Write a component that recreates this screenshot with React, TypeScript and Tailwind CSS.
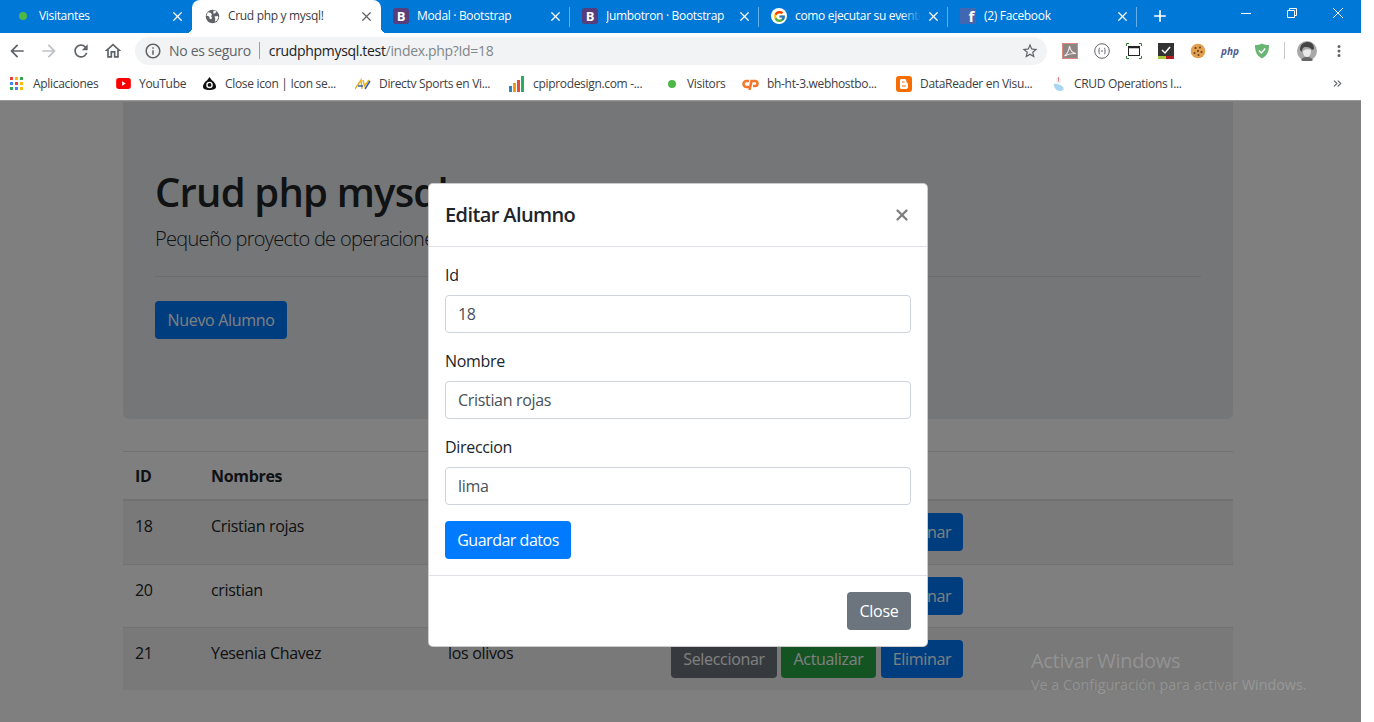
import { ChevronsRight, Plus, X } from 'lucide-react'
import { FcGoogle } from 'react-icons/fc'
import type { ReactNode } from 'react'

function ChromeIcon({ d, className }: { d: string; className: string }) {
  return (
    <svg viewBox="0 0 24 24" className={className} fill="currentColor">
      <path d={d} />
    </svg>
  )
}

const iconPaths = {
  back: 'M20 11H7.83l5.59-5.59L12 4l-8 8 8 8 1.41-1.41L7.83 13H20v-2z',
  forward: 'M4 11h12.17l-5.59-5.59L12 4l8 8-8 8-1.41-1.41L16.17 13H4v-2z',
  reload: 'M17.65 6.35A7.958 7.958 0 0 0 12 4c-4.42 0-7.99 3.58-7.99 8s3.57 8 7.99 8c3.73 0 6.84-2.55 7.73-6h-2.08A5.99 5.99 0 0 1 12 18c-3.31 0-6-2.69-6-6s2.69-6 6-6c1.66 0 3.14.69 4.22 1.78L13 11h7V4l-2.35 2.35z',
  home: 'M12 5.69l5 4.5V18h-2v-6H9v6H7v-7.81l5-4.5M12 3L2 12h3v8h6v-6h2v6h6v-8h3L12 3z',
  info: 'M11 7h2v2h-2zm0 4h2v6h-2zm1-9C6.48 2 2 6.48 2 12s4.48 10 10 10 10-4.48 10-10S17.52 2 12 2zm0 18c-4.41 0-8-3.59-8-8s3.59-8 8-8 8 3.59 8 8-3.59 8-8 8z',
  star: 'M22 9.24l-7.19-.62L12 2 9.19 8.63 2 9.24l5.46 4.73L5.82 21 12 17.27 18.18 21l-1.63-7.03L22 9.24zM12 15.4l-3.76 2.27 1-4.28-3.32-2.88 4.38-.38L12 6.1l1.71 4.04 4.38.38-3.32 2.88 1 4.28L12 15.4z',
  more: 'M12 8a2 2 0 1 0 0-4 2 2 0 0 0 0 4zm0 2a2 2 0 1 0 0 4 2 2 0 0 0 0-4zm0 6a2 2 0 1 0 0 4 2 2 0 0 0 0-4z',
}

function GlobeIcon() {
  return (
    <svg viewBox="0 0 16 16" className="h-[15px] w-[15px]">
      <circle cx="8" cy="8" r="7.2" fill="#5f6368" />
      <path d="M3 3.5l3 .5 1.5 2-1 1.5 1 2-1 1.5-1.5-.5-.5-2.5L1.5 7zM9 1.5l3 1-1 2-2 .5zM10 8l3.5-.5.8 1.5-1.8 3.5-2 1 .5-3z" fill="#fff" />
    </svg>
  )
}

function GreenDot() {
  return <span className="block h-2 w-2 rounded-full bg-[#4db848]" />
}

function BootstrapIcon() {
  return (
    <span className="flex h-4 w-4 items-center justify-center rounded-[3px] bg-[#563d7c] text-[13px] leading-none font-bold text-white">B</span>
  )
}

function FacebookIcon() {
  return (
    <span className="flex h-4 w-4 items-end justify-end bg-[#4267b2] pr-[2px] text-[15px] leading-[15px] font-bold text-white">f</span>
  )
}

function GoogleIcon() {
  return (
    <span className="flex h-4 w-4 items-center justify-center rounded-full bg-white">
      <FcGoogle size={13} />
    </span>
  )
}

const tabs: { title: string; icon: ReactNode; active?: boolean; fade?: boolean; noSep?: boolean }[] = [
  { title: 'Visitantes', icon: <GreenDot />, noSep: true },
  { title: 'Crud php y mysql!', icon: <GlobeIcon />, active: true, noSep: true },
  { title: 'Modal · Bootstrap', icon: <BootstrapIcon /> },
  { title: 'Jumbotron · Bootstrap', icon: <BootstrapIcon /> },
  { title: 'como ejecutar su evento', icon: <GoogleIcon />, fade: true },
  { title: '(2) Facebook', icon: <FacebookIcon /> },
]

function Tab({ title, icon, active, fade, noSep }: (typeof tabs)[number]) {
  return (
    <div className={`relative flex h-[33px] w-[189px] items-center pb-px pl-3 ${active ? 'rounded-t-lg bg-white text-[#3c4043]' : 'text-white'}`}>
      {active && (
        <>
          <span className="absolute bottom-0 -left-[6px] h-[6px] w-[6px] bg-[radial-gradient(circle_at_0_0,transparent_6px,white_6.500px)]" />
          <span className="absolute -right-[6px] bottom-0 h-[6px] w-[6px] bg-[radial-gradient(circle_at_100%_0,transparent_6px,white_6.500px)]" />
        </>
      )}
      <span className="flex w-4 shrink-0 justify-center">{icon}</span>
      <span className="relative ml-2 w-[126px] overflow-hidden text-xs whitespace-nowrap">
        {title}
        {fade && <span className="absolute top-0 right-0 h-full w-5 bg-gradient-to-r from-transparent to-[#0078d7]" />}
      </span>
      <X size={15} strokeWidth={2} className={`ml-[5px] ${active ? 'text-[#5f6368]' : 'text-white'}`} />
      {!noSep && <span className="absolute top-[7px] right-0 h-5 w-px bg-white/40" />}
    </div>
  )
}

function WindowControls() {
  return (
    <div className="ml-auto flex h-full items-start text-white">
      <div className="flex h-[26px] w-[46px] items-center justify-center">
        <span className="block h-px w-[10px] bg-white" />
      </div>
      <div className="flex h-[26px] w-[46px] items-center justify-center">
        <svg viewBox="0 0 10 10" className="h-[10px] w-[10px]" fill="none" stroke="currentColor" strokeWidth="1">
          <path d="M.5 2.5h7v7h-7zM2.5 2.5v-2h7v7h-2" />
        </svg>
      </div>
      <div className="flex h-[26px] w-[46px] items-center justify-center">
        <svg viewBox="0 0 10 10" className="h-[10px] w-[10px]" fill="none" stroke="currentColor" strokeWidth="1">
          <path d="M0 0l10 10M10 0L0 10" />
        </svg>
      </div>
    </div>
  )
}

function TabBar() {
  return (
    <div className="flex h-[33px] bg-[#0078d7] pl-[3px]">
      {tabs.map(tab => (
        <Tab key={tab.title} {...tab} />
      ))}
      <div className="flex h-[33px] w-[46px] items-center justify-center pb-px text-white">
        <Plus size={18} strokeWidth={2.2} />
      </div>
      <WindowControls />
    </div>
  )
}

function AcrobatIcon() {
  return (
    <svg viewBox="0 0 16 16" className="h-4 w-4">
      <rect x=".5" y=".5" width="15" height="15" fill="#8f8484" stroke="#d98b80" />
      <path d="M2.5 13C5 11 7 7 7.5 3c.6 4 3 7 6.5 7.5-4-.3-8 .5-11.500 2.500z" fill="none" stroke="#f3eeee" strokeWidth="1.100" />
    </svg>
  )
}

function ExtensionIcons() {
  return (
    <div className="flex items-center">
      <span className="flex w-8 justify-center"><AcrobatIcon /></span>
      <span className="flex w-8 justify-center">
        <svg viewBox="0 0 16 16" className="h-4 w-4" fill="none" stroke="#5f6368">
          <circle cx="8" cy="8" r="7.300" />
          <path d="M6 5c-1 0-1 1-1 3s0 3 1 3M10 5c1 0 1 1 1 3s0 3-1 3M7 8h2" />
        </svg>
      </span>
      <span className="flex w-8 justify-center">
        <svg viewBox="0 0 16 16" className="h-4 w-4" fill="none">
          <path d="M.5 3V.5H3M13 .5h2.500V3M15.500 13v2.500H13M3 15.500H.5V13" stroke="#2e7d32" />
          <rect x="2.500" y="3.500" width="11" height="9" stroke="#222" />
          <path d="M2.500 4.500h11" stroke="#222" strokeWidth="1.500" />
        </svg>
      </span>
      <span className="flex w-8 justify-center">
        <svg viewBox="0 0 16 16" className="h-4 w-4">
          <rect width="16" height="16" fill="#333" />
          <rect y="13" width="8" height="3" fill="#a4c639" />
          <rect x="8" y="13" width="8" height="3" fill="#b71c1c" />
          <path d="M4 7l3 3 5-6" fill="none" stroke="#fff" strokeWidth="1.500" />
        </svg>
      </span>
      <span className="flex w-8 justify-center">
        <svg viewBox="0 0 16 16" className="h-4 w-4">
          <circle cx="8" cy="8" r="7.300" fill="#e0a050" />
          <circle cx="5.500" cy="5" r="1.100" fill="#6b3e1a" />
          <circle cx="10" cy="4.500" r="1" fill="#6b3e1a" />
          <circle cx="8" cy="8" r="1.100" fill="#6b3e1a" />
          <circle cx="4.500" cy="10" r="1" fill="#6b3e1a" />
          <circle cx="11.500" cy="9" r="1.100" fill="#6b3e1a" />
          <circle cx="8.500" cy="12" r="1" fill="#6b3e1a" />
        </svg>
      </span>
      <span className="flex w-8 justify-center text-[10px] leading-none font-bold tracking-normal text-[#4f5b93] italic">php</span>
      <span className="flex w-8 justify-center">
        <svg viewBox="0 0 16 16" className="h-4 w-4">
          <path d="M8 .5c2 1 4.500 1.500 7 1.500 0 6-1.500 10.500-7 13.500C2.500 12.500 1 8 1 2c2.500 0 5-.5 7-1.500z" fill="#68b574" />
          <path d="M4.800 7.500l2.500 2.500 4-4.500" fill="none" stroke="#fff" strokeWidth="1.500" />
        </svg>
      </span>
      <span className="mx-[6px] h-[17px] w-px bg-[#c8c8c8]" />
      <svg viewBox="0 0 20 20" className="ml-[6px] h-5 w-5">
        <circle cx="10" cy="10" r="10" fill="#a8a8a8" />
        <path d="M3 9c0-6 4-8 8-8s6 3 6 7l-2 1c-1-2-3-3-6-3S5 8 5 11z" fill="#444" />
        <path d="M6 10c2-2 6-2 8-1 0 4-1 7-4 7s-4-3-4-6z" fill="#e8e8e8" />
        <path d="M4 19c1-2 3-3 6-3s5 1 6 3a10 10 0 0 1-12 0z" fill="#666" />
      </svg>
      <span className="ml-[6px] flex w-8 justify-center text-[#5f6368]">
        <ChromeIcon d={iconPaths.more} className="h-[18px] w-[18px]" />
      </span>
    </div>
  )
}

function Toolbar() {
  return (
    <div className="flex h-[35px] items-center bg-white">
      <div className="flex w-[130px] shrink-0 items-center pl-[1px]">
        <span className="flex w-8 justify-center text-[#5f6368]"><ChromeIcon d={iconPaths.back} className="h-5 w-5" /></span>
        <span className="flex w-8 justify-center text-[#bdc1c6]"><ChromeIcon d={iconPaths.forward} className="h-5 w-5" /></span>
        <span className="flex w-8 justify-center text-[#5f6368]"><ChromeIcon d={iconPaths.reload} className="h-5 w-5" /></span>
        <span className="flex w-8 justify-center text-[#5f6368]"><ChromeIcon d={iconPaths.home} className="h-5 w-5" /></span>
      </div>
      <div className="ml-[5px] flex h-7 w-[912px] shrink-0 items-center rounded-full bg-[#f1f3f4] pr-[8px] pl-[9px] text-sm whitespace-nowrap">
        <ChromeIcon d={iconPaths.info} className="h-[18px] w-[18px] text-[#5f6368]" />
        <span className="ml-[7px] text-[#5f6368]">No es seguro</span>
        <span className="mx-2 h-[17px] w-px bg-[#9aa0a6]" />
        <span className="ml-[1px] text-[#202124]">crudphpmysql.test</span>
        <span className="text-[#80868b]">/index.php?Id=18</span>
        <ChromeIcon d={iconPaths.star} className="ml-auto h-[18px] w-[18px] text-[#5f6368]" />
      </div>
      <div className="ml-[7px]">
        <ExtensionIcons />
      </div>
    </div>
  )
}

function AppsIcon() {
  const colors = ['#ea4335', '#fbbc05', '#34a853', '#4285f4', '#ea4335', '#fbbc05', '#34a853', '#4285f4', '#fbbc05']
  return (
    <span className="mr-[2px] grid h-[13px] w-[13px] grid-cols-3 gap-[1.500px]">
      {colors.map((c, i) => (
        <span key={i} style={{ backgroundColor: c }} />
      ))}
    </span>
  )
}

const bookmarks: { label: string; icon: ReactNode; width: string }[] = [
  { label: 'Aplicaciones', icon: <AppsIcon />, width: 'w-[106px]' },
  {
    label: 'YouTube',
    width: 'w-[86px]',
    icon: (
      <svg viewBox="0 0 16 12" className="h-[11px] w-[15px]">
        <rect width="16" height="12" rx="3" fill="#f00" />
        <path d="M6.500 3.500v5l4-2.500z" fill="#fff" />
      </svg>
    ),
  },
  {
    label: 'Close icon | Icon se...',
    width: 'w-[153px]',
    icon: (
      <svg viewBox="0 0 16 16" className="h-[15px] w-[15px]">
        <path d="M8 1l2.500 3.500C13 6 15 9 15 11.500 15 14 12 15 8 15s-7-1-7-3.500C1 9 3 6 5.500 4.500z" fill="#111" />
        <circle cx="8" cy="9.500" r="3.500" fill="#fff" />
        <circle cx="8" cy="9.500" r="2" fill="#111" />
      </svg>
    ),
  },
  {
    label: 'Directv Sports en Vi...',
    width: 'w-[154px]',
    icon: (
      <svg viewBox="0 0 16 12" className="h-3 w-4">
        <path d="M0 11L6 2l1 9M8 2l1.500 6L14 2" fill="none" stroke="#e6b422" strokeWidth="1.500" />
        <path d="M3 8h5M10 11l5-8" fill="none" stroke="#3f5fa8" strokeWidth="1.500" />
      </svg>
    ),
  },
  {
    label: 'cpiprodesign.com -...',
    width: 'w-[156px]',
    icon: (
      <span className="flex h-4 w-4 items-end gap-px">
        <span className="h-[6px] w-[3px] bg-[#2e86c1]" />
        <span className="h-[9px] w-[3px] bg-[#f39c12]" />
        <span className="h-[12px] w-[3px] bg-[#e74c3c]" />
        <span className="h-4 w-[3px] bg-[#27ae60]" />
      </span>
    ),
  },
  {
    label: 'Visitors',
    width: 'w-[77px]',
    icon: (
      <span className="flex w-[14px] justify-center">
        <GreenDot />
      </span>
    ),
  },
  {
    label: 'bh-ht-3.webhostbo...',
    width: 'w-[154px]',
    icon: (
      <svg viewBox="0 0 17 12" className="h-3 w-[17px]" fill="none" stroke="#f4772e" strokeWidth="2.600">
        <path d="M7 3H4.500a3 3 0 0 0 0 6H7" />
        <path d="M7.500 12L9.500 3H13a2.500 2.500 0 0 1 0 5h-2" />
      </svg>
    ),
  },
  {
    label: 'DataReader en Visu...',
    width: 'w-[156px]',
    icon: (
      <svg viewBox="0 0 16 16" className="h-4 w-4">
        <rect width="16" height="16" rx="3" fill="#f76d00" />
        <path d="M5.500 3h3C10 3 10.500 4 10.500 6c0 1 1.500 .5 1.500 2v3c0 1.500-1 2-2 2H5.500C4.500 13 4 12.500 4 11.500v-7C4 3.500 4.500 3 5.500 3z" fill="#fff" />
        <path d="M6 6h2.500M6 10h4" stroke="#f76d00" strokeWidth="1.200" />
      </svg>
    ),
  },
  {
    label: 'CRUD Operations I...',
    width: 'w-[140px]',
    icon: (
      <svg viewBox="0 0 16 18" className="h-4 w-[14px]">
        <path d="M2 9c3-1 8 0 11 4 1 2-1 4-4 4-4 0-7-4-7-8z" fill="#a9d6f0" />
        <path d="M5 2h5v6H5z" fill="#e8eef2" />
        <path d="M7 1h1v5H7z" fill="#e57373" />
      </svg>
    ),
  },
]

function BookmarksBar() {
  return (
    <div className="flex h-8 items-center bg-white pb-px pl-[10px] text-xs text-[#3c4043]">
      {bookmarks.map(b => (
        <div key={b.label} className={`flex items-center gap-[8px] whitespace-nowrap ${b.width}`}>
          <span className="flex shrink-0 items-center">{b.icon}</span>
          <span>{b.label}</span>
        </div>
      ))}
      <ChevronsRight size={13} strokeWidth={2} className="ml-[139px] text-[#5f6368]" />
    </div>
  )
}

const rows = [
  { id: 18, name: 'Cristian rojas', address: 'lima' },
  { id: 20, name: 'cristian', address: 'lima' },
  { id: 21, name: 'Yesenia Chavez', address: 'los olivos' },
]

function StudentTable() {
  return (
    <div className="mt-8 border-t border-[#dee2e6] text-[#212529]">
      <div className="grid h-[49px] grid-cols-[76px_237px_223px_1fr] items-center border-b-2 border-[#dee2e6] px-3 font-bold">
        <span>ID</span>
        <span>Nombres</span>
        <span>Direccion</span>
        <span>Acciones</span>
      </div>
      {rows.map((row, i) => (
        <div
          key={row.id}
          className={`grid h-[63px] grid-cols-[76px_237px_223px_1fr] border-[#dee2e6] px-3 pt-[12px] leading-[26px] ${i > 0 ? 'border-t' : ''} ${i % 2 === 0 ? 'bg-[#f2f2f2]' : ''}`}
        >
          <span>{row.id}</span>
          <span>{row.name}</span>
          <span>{row.address}</span>
          <div className="flex text-white">
            <button className="h-[38px] w-[106px] rounded bg-[#6c757d]">Seleccionar</button>
            <button className="ml-1 h-[38px] w-[95px] rounded bg-[#28a745]">Actualizar</button>
            <button className="ml-[5px] h-[38px] w-[82px] rounded bg-[#007bff]">Eliminar</button>
          </div>
        </div>
      ))}
    </div>
  )
}

function Field({ label, value }: { label: string; value: string }) {
  return (
    <div className="mb-4">
      <label className="mb-2 block h-6 leading-6 text-[#212529]">{label}</label>
      <input
        readOnly
        value={value}
        className="block h-[38px] w-full rounded border border-[#ced4da] bg-white px-3 text-[#495057]"
      />
    </div>
  )
}

function EditModal() {
  return (
    <div className="absolute top-[82px] left-[428px] w-[500px] overflow-hidden rounded-[5px] border border-black/20 bg-white">
      <div className="flex h-[63px] items-center justify-between border-b border-[#dee2e6] px-4">
        <h5 className="text-xl font-[550] tracking-[-0.03em] text-[#212529]">Editar Alumno</h5>
        <X size={18} strokeWidth={3} className="text-[#7f7f7f]" />
      </div>
      <div className="px-4 pt-4 pb-4">
        <Field label="Id" value="18" />
        <Field label="Nombre" value="Cristian rojas" />
        <Field label="Direccion" value="lima" />
        <button className="h-[38px] w-[126px] rounded bg-[#007bff] tracking-[-0.03em] text-white">Guardar datos</button>
      </div>
      <div className="flex h-[71px] items-center justify-end border-t border-[#dee2e6] px-4">
        <button className="h-[38px] w-16 rounded bg-[#6c757d] text-white">Close</button>
      </div>
    </div>
  )
}

export default function App() {
  return (
    <div className="relative h-[722px] w-[1374px] overflow-hidden bg-white font-['Open_Sans','Noto_Sans',sans-serif] text-base tracking-[-0.02em]">
      <div className="w-[1361px]">
        <TabBar />
        <Toolbar />
        <BookmarksBar />
        <div className="relative h-[622px] border-t border-[#999] bg-white">
          <div className="mt-px ml-[123px] w-[1110px]">
            <div className="h-[317px] rounded-b-md bg-[#e9ecef] px-8 pt-[66px]">
              <h1 className="text-[40px] leading-[1.2] font-[550] tracking-[-0.02em] text-[#212529]">Crud php mysql</h1>
              <p className="mt-[9px] text-xl font-light tracking-[-0.035em] whitespace-nowrap text-[#212529]">Pequeño proyecto de operaciones CRUD con PHP y MySQL</p>
              <hr className="mt-[23px] border-[#d5d8db]" />
              <button className="mt-6 h-[38px] w-[132px] rounded bg-[#007bff] text-white">Nuevo Alumno</button>
            </div>
            <StudentTable />
          </div>
          <div className="absolute inset-0 bg-black/50" />
          <EditModal />
          <div className="absolute top-[546px] left-[1031px] text-white/20">
            <div className="text-xl leading-7">Activar Windows</div>
            <div className="text-[14.3px] leading-5 tracking-normal">Ve a Configuración para activar Windows.</div>
          </div>
        </div>
      </div>
    </div>
  )
}
